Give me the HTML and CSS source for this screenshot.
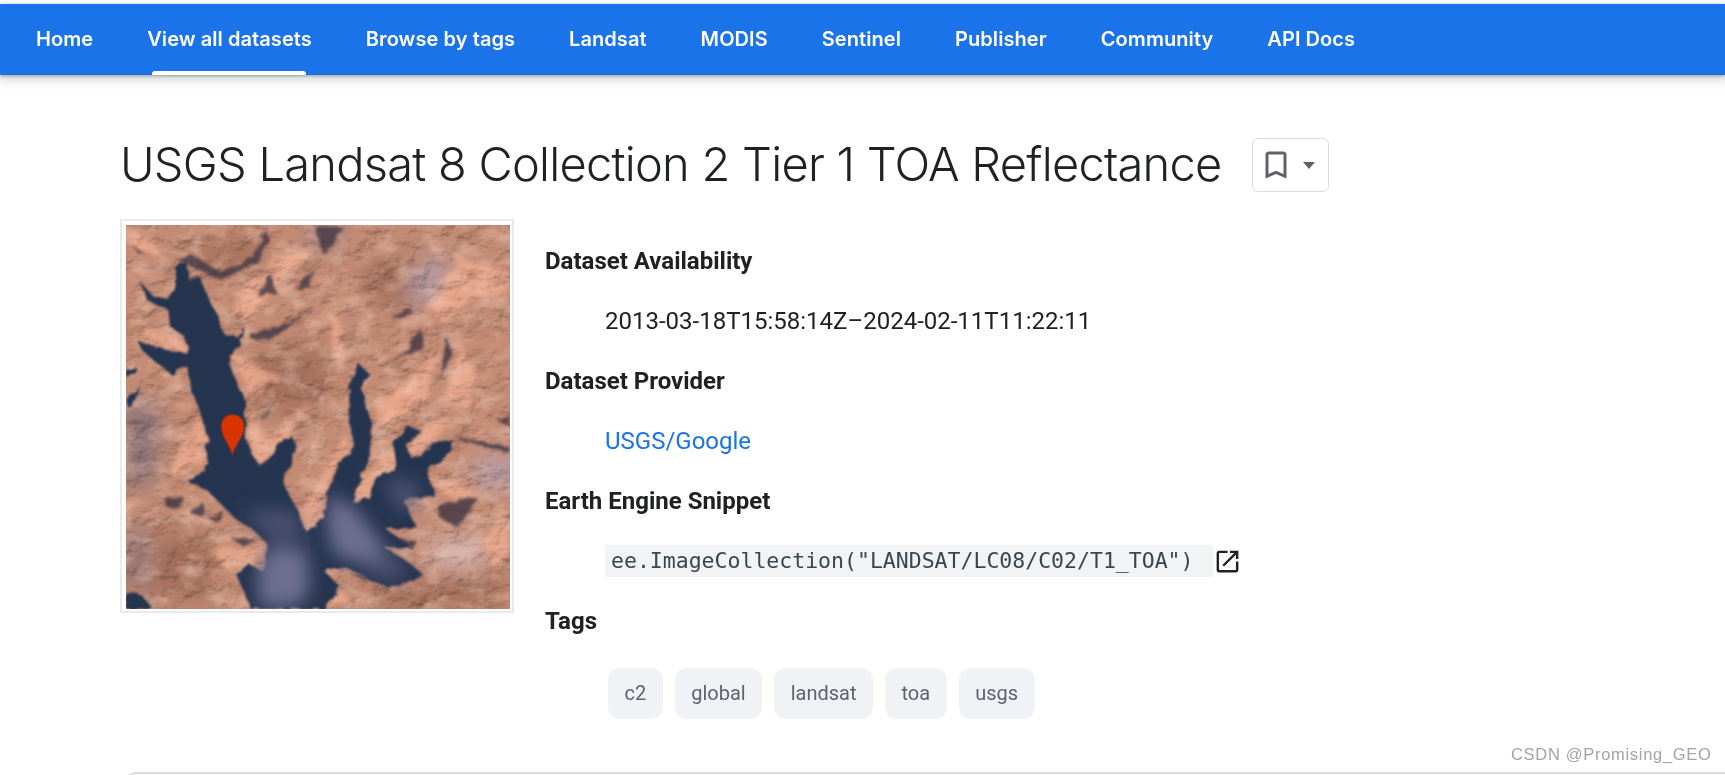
FILE: index.html
```html
<!DOCTYPE html>
<html lang="en">
<head>
<meta charset="utf-8">
<title>USGS Landsat 8 Collection 2 Tier 1 TOA Reflectance</title>
<link rel="stylesheet" href="styles.css">
</head>
<body>
<nav class="tabs">
  <a class="tab">Home</a>
  <a class="tab tab-active">View all datasets</a>
  <a class="tab">Browse by tags</a>
  <a class="tab">Landsat</a>
  <a class="tab">MODIS</a>
  <a class="tab">Sentinel</a>
  <a class="tab">Publisher</a>
  <a class="tab">Community</a>
  <a class="tab">API Docs</a>
</nav>
<main class="page">
  <header class="title-row">
    <h1 class="title">USGS Landsat 8 Collection 2 Tier 1 TOA Reflectance</h1>
    <button class="bookmark" type="button" aria-label="Bookmark">
      <svg class="bookmark-icon" viewBox="0 0 24 24"><path d="M17 3H7c-1.1 0-2 .9-2 2v16l7-3 7 3V5c0-1.1-.9-2-2-2zm0 15l-5-2.18L7 18V5h10v13z"/></svg>
      <span class="caret"></span>
    </button>
  </header>
  <section class="overview">
    <figure class="thumb">
      <svg class="thumb-img" viewBox="48 45 1152 1152" role="img" aria-label="Landsat image of a reservoir">
        <defs>
          <filter id="relief" x="0" y="0" width="100%" height="100%">
            <feTurbulence type="fractalNoise" baseFrequency="0.011 0.015" numOctaves="5" seed="11"/>
            <feDiffuseLighting surfaceScale="12" diffuseConstant="1.250" lighting-color="#ffffff"><feDistantLight azimuth="235" elevation="52"/></feDiffuseLighting>
          </filter>
          <filter id="light" x="0" y="0" width="100%" height="100%">
            <feTurbulence type="fractalNoise" baseFrequency="0.014 0.02" numOctaves="4" seed="29"/>
            <feColorMatrix values="0 0 0 0 0.93  0 0 0 0 0.64  0 0 0 0 0.52  0 2.2 0 0 -1"/>
          </filter>
          <filter id="rough" x="-5%" y="-5%" width="110%" height="110%">
            <feTurbulence type="fractalNoise" baseFrequency="0.035" numOctaves="3" seed="4" result="n"/>
            <feDisplacementMap in="SourceGraphic" in2="n" scale="22"/>
            <feGaussianBlur stdDeviation="2.500"/>
          </filter>
          <filter id="shadow" x="-10%" y="-10%" width="120%" height="120%">
            <feTurbulence type="fractalNoise" baseFrequency="0.035" numOctaves="3" seed="7" result="n"/>
            <feDisplacementMap in="SourceGraphic" in2="n" scale="18"/>
            <feGaussianBlur stdDeviation="4"/>
          </filter>
          <filter id="soft" x="-10%" y="-10%" width="120%" height="120%">
            <feTurbulence type="fractalNoise" baseFrequency="0.03" numOctaves="3" seed="9" result="n"/>
            <feDisplacementMap in="SourceGraphic" in2="n" scale="30"/>
            <feGaussianBlur stdDeviation="8"/>
          </filter>
          <filter id="b40" x="-40%" y="-40%" width="180%" height="180%"><feGaussianBlur stdDeviation="36"/></filter>
          <filter id="b24" x="-50%" y="-50%" width="200%" height="200%"><feGaussianBlur stdDeviation="26"/></filter>
        </defs>
        <rect class="land" x="48" y="45" width="1152" height="1152"/>
        <g filter="url(#b40)">
          <path class="warm" d="M230 100L480 70 430 170 300 200Z"/>
          <path class="warm" d="M760 150L930 140 950 260 850 300 760 240Z"/>
          <path class="warm" d="M430 430L640 380 660 560 520 620 430 590Z"/>
          <path class="warm" d="M150 950L340 1000 300 1180 100 1150Z"/>
          <path class="warm" d="M800 1120L1200 1100 1200 1197 780 1197Z"/>
          <path class="mauve" d="M48 560L150 590 130 820 48 830Z"/>
          <path class="mauve" d="M48 950L110 960 100 1150 48 1130Z"/>
          <path class="mauve" d="M600 45L700 45 660 120 610 110Z"/>
          <path class="lav" d="M900 220L1010 130 1010 200 930 290Z"/>
          <path class="lav" d="M1090 760L1200 740 1200 830 1110 830Z"/>
          <path class="pale" d="M950 1000L1130 980 1110 1070 960 1060Z"/>
        </g>
        <g class="peach" filter="url(#soft)">
          <path d="M100 345L170 375 225 395 240 435 170 410 100 375Z"/>
          <path d="M415 700L450 768 545 670 565 600 605 585 530 650 470 690 425 610Z"/>
          <path d="M560 900L590 965 640 925 650 820 735 715 700 680 650 770 600 860Z"/>
          <path d="M730 880L780 860 860 790 850 720 790 780 745 800Z"/>
          <path d="M890 710L910 745 1000 660 1030 580 960 640Z"/>
          <path d="M950 810L1040 870 1110 855 1050 825 960 800Z"/>
          <path d="M960 290L1050 140 1200 190 1190 250 1100 260 1000 340Z"/>
          <path d="M360 300L420 220 520 130 600 130 500 230 420 330Z"/>
          <path d="M190 800L290 750 260 700 300 700 270 620 220 700 180 790Z"/>
          <path d="M300 1020L465 1000 440 1060 350 1075Z"/>
          <path d="M660 300L690 330 700 460 670 450Z"/>
          <path d="M1050 400L1100 500 1070 600 1000 560 1030 480Z"/>
          <path d="M800 560L900 520 980 420 950 560 860 640 800 640Z"/>
          <path d="M1120 1000L1200 880 1200 1000 1150 1080Z"/>
          <path d="M50 60L130 90 150 140 70 120Z"/>
          <path d="M360 420L420 460 510 500 420 560Z"/>
          <path d="M630 1140L720 1160 700 1190 620 1180Z"/>
        </g>
        <rect class="relief" x="48" y="45" width="1152" height="1152" filter="url(#relief)"/>
        <rect class="sheen" x="48" y="45" width="1152" height="1152" filter="url(#light)"/>
        <g class="cut" filter="url(#shadow)">
          <path d="M200 150L330 210 440 160 480 90 470 60 430 140 330 185 240 130Z"/>
          <path d="M420 390L490 385 590 310 620 285 525 345 420 370Z"/>
          <path d="M810 470L940 415 935 350 880 430Z"/>
          <path d="M845 322L900 290 905 310 850 328Z"/>
          <path d="M990 500L1028 440 1012 380Z"/>
          <path d="M900 660L1000 610 1022 590 960 635Z"/>
          <path d="M90 210L130 265 190 280 130 270Z"/>
          <path d="M615 50L705 50 640 135Z"/>
          <path d="M1040 680L1200 710 1200 730 1060 695Z"/>
          <path d="M1160 630L1200 620 1200 650Z"/>
          <path d="M160 865L220 860 215 895 172 892Z"/>
          <path d="M240 910L282 878 282 922Z"/>
          <path d="M290 922L340 910 332 940Z"/>
          <path d="M360 980L440 990 400 1010Z"/>
          <path d="M985 885L1105 862 1040 950 990 925Z"/>
          <path d="M830 980L920 990 915 1015 860 1000Z"/>
          <path d="M440 260L480 190 500 250Z"/>
          <path d="M560 240L610 175 600 230Z"/>
          <path d="M450 640L495 565 470 620Z"/>
          <path d="M700 1090L850 1130 940 1090 880 1060 800 1100Z"/>
          <path d="M70 110L110 130 80 130Z"/>
        </g>
        <g class="water" filter="url(#rough)">
          <path d="M195 165L225 150 240 210 265 195 285 240 310 290 330 340 345 375 385 380 405 345 400 375 370 430 360 470 385 520 405 570 408 620 405 680 430 740 450 768 490 725 545 675 555 700 545 760 520 790 530 840 560 900 590 965 600 1030 600 1100 630 1140 640 1197 420 1197 400 1140 375 1090 420 1065 460 1085 470 1000 430 960 380 930 330 880 290 840 235 815 265 790 295 760 285 710 300 700 280 640 265 590 240 530 232 470 180 490 130 450 95 420 85 395 120 405 170 420 235 432 225 380 180 350 175 300 115 275 90 215 130 260 175 270 195 235Z"/>
          <path d="M745 460L775 490 755 540 765 580 785 650 785 725 755 790 730 880 780 860 790 810 860 770 850 700 890 650 935 660 890 710 905 745 980 700 1035 690 1000 750 950 770 975 860 880 870 920 950 830 960 910 1015 820 1010 900 1060 940 1100 830 1130 700 1070 640 1080 690 1130 640 1197 600 1100 600 1030 590 965 640 920 655 850 670 790 730 710 715 620 720 520Z"/>
          <path d="M48 1145L90 1150 130 1197 48 1197Z"/>
          <path d="M48 480L85 470 60 500 48 500Z"/>
          <path d="M48 570L90 530 80 570 55 595Z"/>
        </g>
        <g filter="url(#b24)">
          <path class="haze" d="M660 850L740 900 800 980 840 1040 750 1060 670 1030 650 940Z"/>
          <path class="haze" d="M470 1010L590 1020 600 1140 560 1190 450 1190 440 1100Z"/>
          <path class="haze-dim" d="M400 900L560 900 580 1000 480 990Z"/>
          <path class="haze-dim" d="M820 800L930 820 920 900 860 900Z"/>
          <path class="haze-dim" d="M780 1030L900 1060 860 1120 760 1090Z"/>
        </g>
        <path class="pin" d="M367 735C360 705 334 680 334 648C334 628 348 614 367 614C386 614 402 628 402 648C402 680 374 705 367 735Z"/>
      </svg>
    </figure>
    <dl class="facts">
      <dt class="fact-label">Dataset Availability</dt>
      <dd class="fact-value">2013-03-18T15:58:14Z–2024-02-11T11:22:11</dd>
      <dt class="fact-label">Dataset Provider</dt>
      <dd class="fact-value"><a class="link">USGS/Google</a></dd>
      <dt class="fact-label">Earth Engine Snippet</dt>
      <dd class="fact-value snippet-row">
        <code class="snippet">ee.ImageCollection("LANDSAT/LC08/C02/T1_TOA")</code>
        <svg class="open-icon" viewBox="0 0 24 24"><path d="M19 19H5V5h7V3H5c-1.110 0-2 .9-2 2v14c0 1.100.89 2 2 2h14c1.100 0 2-.9 2-2v-7h-2v7zM14 3v2h3.590l-9.830 9.830 1.410 1.410L19 6.410V10h2V3h-7z"/></svg>
      </dd>
      <dt class="fact-label">Tags</dt>
      <dd class="chips">
        <span class="chip">c2</span>
        <span class="chip">global</span>
        <span class="chip">landsat</span>
        <span class="chip">toa</span>
        <span class="chip">usgs</span>
      </dd>
    </dl>
  </section>
  <div class="card-edge"></div>
</main>
<div class="watermark">CSDN @Promising_GEO</div>
</body>
</html>
```
FILE: styles.css
```css
html, body {
  margin: 0;
  height: 775px;
  overflow: hidden;
  background: #fff;
}
body {
  padding-top: 4px;
  box-sizing: border-box;
  font-family: Roboto, "Liberation Sans", sans-serif;
  color: #202124;
}
.tabs {
  display: flex;
  gap: 54px;
  height: 71px;
  padding-left: 36px;
  background: #1a73e8;
  box-shadow: 0 1px 3px rgba(60,64,67,.45), 0 4px 8px 3px rgba(60,64,67,.15);
  position: relative;
}
.tab {
  position: relative;
  font-family: Inter, "Open Sans", sans-serif;
  font-size: 20px;
  font-weight: 600;
  letter-spacing: 0.07px;
  line-height: 71px;
  color: #fff;
}
.tab-active::after {
  content: "";
  position: absolute;
  left: 5px;
  right: 6px;
  bottom: 0;
  height: 4px;
  background: #fff;
  border-radius: 3px 3px 0 0;
}
.page {
  height: 700px;
  overflow: hidden;
  padding-left: 120px;
}
.title-row {
  display: flex;
  align-items: center;
  gap: 30px;
  height: 54px;
  margin-top: 63px;
}
.title {
  margin: -2px 0 0;
  font-family: Inter, "Open Sans", sans-serif;
  font-size: 47px;
  font-weight: 300;
  letter-spacing: -0.75px;
  line-height: 54px;
  white-space: nowrap;
  color: #202124;
}
.bookmark {
  display: flex;
  align-items: center;
  box-sizing: border-box;
  width: 77px;
  height: 54px;
  padding: 0 0 0 5px;
  background: #fff;
  border: 1px solid #dadce0;
  border-radius: 6px;
}
.bookmark-icon {
  width: 36px;
  height: 36px;
  fill: #5f6368;
}
.caret {
  margin-left: 9px;
  border-left: 6px solid transparent;
  border-right: 6px solid transparent;
  border-top: 7px solid #5f6368;
}
.overview {
  display: flex;
  gap: 31px;
  margin-top: 27px;
}
.thumb {
  margin: 0;
  padding: 4px 2px 2px 4px;
  width: 384px;
  height: 384px;
  border: 2px solid #e8eaed;
  flex: none;
}
.thumb-img {
  display: block;
  width: 384px;
  height: 384px;
}
.land { fill: #c48c75; }
.warm { fill: #a5705b; }
.mauve { fill: #85717a; }
.lav { fill: #b3a5bd; }
.pale { fill: #d8bcbc; }
.peach { fill: #eeab8e; opacity: .8; }
.relief { mix-blend-mode: multiply; }
.sheen { opacity: .5; }
.cut { fill: #3f3542; opacity: .8; }
.water { fill: #28344f; }
.haze { fill: #7f7da0; opacity: .8; }
.haze-dim { fill: #5d6080; opacity: .65; }
.pin { fill: #d93400; stroke: #b52c00; stroke-width: 1.500; }
.facts {
  margin: 0;
  padding-top: 27px;
  font-size: 24px;
  line-height: 30px;
}
.fact-label {
  font-weight: 700;
  margin-bottom: 30px;
  color: #202124;
}
.fact-value {
  margin: 0 0 30px 60px;
}
.link {
  color: #1a73e8;
}
.snippet-row {
  display: flex;
  align-items: center;
  height: 32px;
  margin-top: -1px;
  margin-bottom: 29px;
}
.snippet {
  box-sizing: border-box;
  width: 608px;
  height: 32px;
  padding-left: 6px;
  background: #f1f3f4;
  font-family: "DejaVu Sans Mono", "Liberation Mono", monospace;
  font-size: 21.500px;
  line-height: 32px;
  color: #37474f;
  white-space: pre;
}
.open-icon {
  width: 29px;
  height: 29px;
  flex: none;
  fill: #202124;
}
.chips {
  display: flex;
  gap: 12px;
  margin: 32px 0 0 63px;
}
.chip {
  height: 51px;
  padding: 0 16.500px;
  border-radius: 12px;
  background: #f1f2f6;
  font-size: 20px;
  line-height: 51px;
  color: #5f6368;
}
.card-edge {
  margin: 53px 0 0 6px;
  height: 40px;
  border: 2px solid #dadce0;
  border-bottom: 0;
  border-right: 0;
  border-radius: 10px 0 0 0;
}
.watermark {
  position: absolute;
  left: 1511px;
  top: 744px;
  font-family: "Liberation Sans", sans-serif;
  font-size: 16.500px;
  line-height: 20px;
  letter-spacing: .7px;
  color: #a3a3a3;
  text-shadow: 0 0 2px #fff;
  white-space: nowrap;
}
```
